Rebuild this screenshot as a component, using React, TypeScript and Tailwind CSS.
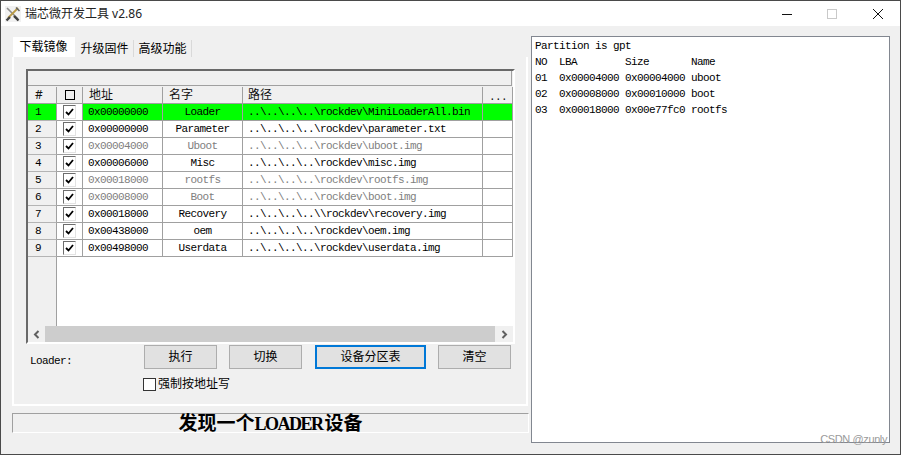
const mono = "font-['Liberation_Mono','Noto_Sans_CJK_SC',monospace] text-[11px] tracking-[-0.6px]"
const ui = "font-['Noto_Sans','Noto_Sans_CJK_SC',sans-serif] text-[12px]"

const rows = [
  { no: 1, addr: '0x00000000', name: 'Loader', path: '..\\..\\..\\..\\rockdev\\MiniLoaderAll.bin', on: true },
  { no: 2, addr: '0x00000000', name: 'Parameter', path: '..\\..\\..\\..\\rockdev\\parameter.txt' },
  { no: 3, addr: '0x00004000', name: 'Uboot', path: '..\\..\\..\\..\\rockdev\\uboot.img', dim: true },
  { no: 4, addr: '0x00006000', name: 'Misc', path: '..\\..\\..\\..\\rockdev\\misc.img' },
  { no: 5, addr: '0x00018000', name: 'rootfs', path: '..\\..\\..\\..\\rockdev\\rootfs.img', dim: true },
  { no: 6, addr: '0x00008000', name: 'Boot', path: '..\\..\\..\\..\\rockdev\\boot.img', dim: true },
  { no: 7, addr: '0x00018000', name: 'Recovery', path: '..\\..\\..\\..\\\\rockdev\\recovery.img' },
  { no: 8, addr: '0x00438000', name: 'oem', path: '..\\..\\..\\..\\rockdev\\oem.img' },
  { no: 9, addr: '0x00498000', name: 'Userdata', path: '..\\..\\..\\..\\rockdev\\userdata.img' },
]

const partitionLines = [
  'Partition is gpt',
  'NO  LBA        Size       Name',
  '01  0x00004000 0x00004000 uboot',
  '02  0x00008000 0x00010000 boot',
  '03  0x00018000 0x00e77fc0 rootfs',
]

function TitleIcon() {
  return (
    <svg width="16" height="16" viewBox="0 0 16 16" className="ml-[4px] shrink-0">
      <rect width="16" height="16" fill="#f1f1f1" />
      <path d="M2 2 L13 13" stroke="#8c8c8c" strokeWidth="1.6" />
      <path d="M9 10 L13.5 14.5" stroke="#3d3d3d" strokeWidth="2.4" />
      <path d="M13 2 L3 12" stroke="#b99a45" strokeWidth="1.8" />
      <path d="M1.5 14.5 L5 11" stroke="#444" strokeWidth="2.4" />
      <path d="M11 1.5 L14.5 5" stroke="#666" strokeWidth="1.6" />
    </svg>
  )
}

function RowCheck() {
  return (
    <div className="w-[13px] h-[14px] bg-white border-l border-t border-[#6d6d6d] border-r border-r-[#e3e3e3] border-b border-b-[#e3e3e3] flex items-center justify-center">
      <svg width="9" height="8" viewBox="0 0 9 8">
        <path d="M1 4 L3.5 6.5 L8 1" fill="none" stroke="#000" strokeWidth="1.8" />
      </svg>
    </div>
  )
}

function Btn({ label, w, active }: { label: string; w: string; active?: boolean }) {
  return (
    <button
      className={`${w} h-[24px] bg-[#e1e1e1] text-black ${ui} ${active ? 'border-2 border-[#0078d7]' : 'border border-[#adadad]'}`}
    >
      {label}
    </button>
  )
}

export default function App() {
  return (
    <div className="relative w-[901px] h-[455px] overflow-hidden bg-[#f0f0f0] border border-[#4a4a4a] flex flex-col">
      {/* Title bar */}
      <div className="h-[25px] shrink-0 bg-white flex items-center">
        <TitleIcon />
        <span className={`ml-[4px] text-[#222] ${ui}`}>瑞芯微开发工具 v2.86</span>
        <div className="ml-auto flex items-center">
          <svg width="10" height="10" viewBox="0 0 10 10" className="mr-[35px]">
            <path d="M0 5.5 H10" stroke="#111" strokeWidth="1" />
          </svg>
          <svg width="10" height="10" viewBox="0 0 10 10" className="mr-[36px]">
            <rect x="0.5" y="0.5" width="9" height="9" fill="none" stroke="#c9c9c9" />
          </svg>
          <svg width="10" height="10" viewBox="0 0 10 10" className="mr-[17px]">
            <path d="M0 0 L10 10 M10 0 L0 10" stroke="#111" strokeWidth="1" />
          </svg>
        </div>
      </div>

      {/* Body */}
      <div className="flex-1 flex pl-[11px] pt-[11px]">
        <div className="w-[517px] shrink-0 flex flex-col">
          {/* Tabs */}
          <div className={`h-[20px] flex items-end pl-[1px] text-black ${ui}`}>
            <div className="w-[62px] h-[20px] bg-white flex items-center justify-center pr-[1px]">下载镜像</div>
            <div className="ml-[1px] w-[58px] h-[17px] border-r border-[#d9d9d9] flex items-center justify-center">升级固件</div>
            <div className="w-[58px] h-[17px] border-r border-[#d9d9d9] flex items-center justify-center">高级功能</div>
          </div>

          {/* Tab pane */}
          <div className="w-[516px] h-[349px] border-2 border-t-0 border-white pt-[12px] pl-[12px]">
            <div className="w-[489px] border-l-2 border-t-2 border-l-[#696969] border-t-[#696969] border-r-2 border-b-2 border-r-white border-b-white">
              <div className="h-[15px] mr-[1px] border-b border-r border-[#a0a0a0]" />
              {/* Header */}
              <div className={`h-[17px] mt-[1px] flex border-b border-[#a0a0a0] text-[#111] ${ui}`}>
                <div className={`w-[29px] border-r border-[#a0a0a0] pl-[7px] leading-[16px] ${ui}`}>#</div>
                <div className="w-[26px] border-r border-[#a0a0a0] flex items-center justify-center">
                  <div className="w-[10px] h-[10px] border border-black" />
                </div>
                <div className="w-[80px] border-r border-[#a0a0a0] pl-[6px] leading-[16px]">地址</div>
                <div className="w-[80px] border-r border-[#a0a0a0] pl-[6px] leading-[16px]">名字</div>
                <div className="w-[240px] border-r border-[#a0a0a0] pl-[5px] leading-[16px]">路径</div>
                <div className={`w-[30px] border-r border-[#a0a0a0] pl-[6px] leading-[20px] ${mono}`}>...</div>
              </div>

              {/* Table body */}
              <div className="h-[222px] flex flex-col">
                {rows.map(r => {
                  const text = r.dim ? 'text-[#808080]' : 'text-black'
                  const cell = r.on ? 'bg-[#00ff00]' : 'bg-white'
                  return (
                    <div key={r.no} className={`h-[17px] flex shrink-0 ${mono} ${text}`}>
                      <div className={`w-[29px] border-r border-[#a0a0a0] border-b border-b-[#b4b4b4] pl-[7px] leading-[16px] ${r.on ? 'bg-[#00ff00] text-black' : 'bg-[#f0f0f0] text-black'}`}>
                        {r.no}
                      </div>
                      <div className="w-[26px] bg-white border-r border-b border-[#a0a0a0] pl-[6px] pt-[1px]">
                        <RowCheck />
                      </div>
                      <div className={`w-[80px] border-r border-b border-[#a0a0a0] pl-[5px] leading-[16px] ${cell}`}>{r.addr}</div>
                      <div className={`w-[80px] border-r border-b border-[#a0a0a0] text-center leading-[16px] ${cell}`}>{r.name}</div>
                      <div className={`w-[240px] border-r border-b border-[#a0a0a0] pl-[5px] leading-[16px] whitespace-pre ${cell}`}>{r.path}</div>
                      <div className={`w-[30px] border-r border-b border-[#a0a0a0] ${cell}`} />
                    </div>
                  )
                })}
                <div className="flex-1 flex bg-white">
                  <div className="w-[29px] bg-[#f0f0f0] border-r border-[#a0a0a0]" />
                </div>
              </div>

              {/* Scrollbar */}
              <div className="h-[16px] flex bg-[#f0f0f0]">
                <div className="w-[17px] flex items-center justify-center">
                  <svg width="7" height="9" viewBox="0 0 7 9">
                    <path d="M5.5 1 L2 4.5 L5.5 8" fill="none" stroke="#606060" strokeWidth="2" />
                  </svg>
                </div>
                <div className="w-[450px] bg-[#cdcdcd]" />
                <div className="flex-1 flex items-center justify-center">
                  <svg width="7" height="9" viewBox="0 0 7 9">
                    <path d="M1.5 1 L5 4.5 L1.5 8" fill="none" stroke="#606060" strokeWidth="2" />
                  </svg>
                </div>
              </div>
            </div>

            {/* Buttons */}
            <div className="mt-[1px] flex items-start">
              <div className={`w-[118px] pl-[4px] pt-[8px] text-black leading-[16px] ${mono}`}>Loader:</div>
              <Btn label="执行" w="w-[73px]" />
              <div className="w-[12px]" />
              <Btn label="切换" w="w-[73px]" />
              <div className="w-[13px]" />
              <Btn label="设备分区表" w="w-[111px]" active />
              <div className="w-[12px]" />
              <Btn label="清空" w="w-[73px]" />
            </div>
            <div className={`mt-[8px] ml-[117px] flex items-center h-[14px] text-black ${ui}`}>
              <div className="w-[13px] h-[13px] bg-white border border-[#333]" />
              <span className="ml-[2px]">强制按地址写</span>
            </div>
          </div>

          {/* Status */}
          <div className="mt-[7px] w-[517px] h-[20px] border-t border-l border-[#a0a0a0] border-r border-r-white border-b border-b-white text-center text-black font-bold text-[19px] leading-[19px] font-['Liberation_Serif','Noto_Sans_CJK_SC',serif]">
            发现一个<span className="text-[18px] tracking-[-1.5px]">LOADER</span><span className="ml-[2px]">设备</span>
          </div>
        </div>

        {/* Partition output */}
        <div className={`ml-[2px] w-[359px] h-[407px] -mt-[1px] bg-white border border-[#828790] pl-[3px] pt-[1px] text-black leading-[16px] whitespace-pre ${mono}`}>
          {partitionLines.map(l => (
            <div key={l}>{l}</div>
          ))}
        </div>
      </div>

      {/* Watermark */}
      <div className="absolute right-[13px] bottom-[8px] text-[11px] tracking-[-0.4px] leading-[13px] text-[#9a9a9a] font-['Liberation_Sans',sans-serif]">
        CSDN @zunly
      </div>
    </div>
  )
}
